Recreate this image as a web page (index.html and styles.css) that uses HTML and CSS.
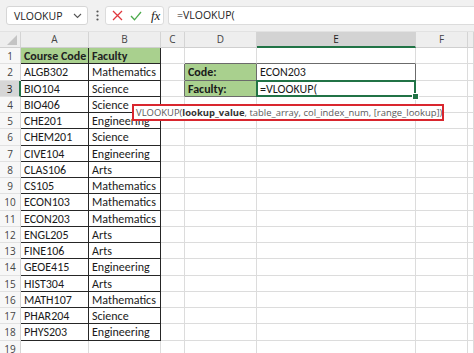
FILE: index.html
```html
<!DOCTYPE html>
<html>
<head>
<meta charset="utf-8">
<link rel="stylesheet" href="styles.css">
</head>
<body>
<div class="app">
  <div class="toolbar">
    <div class="namebox">
      <span>VLOOKUP</span>
      <svg class="chev" width="9" height="6" viewBox="0 0 9 6"><polyline points="1,1 4.5,4.5 8,1" fill="none" stroke="#555" stroke-width="1.1"/></svg>
    </div>
    <svg class="dots" width="3" height="11" viewBox="0 0 3 11"><circle cx="1.5" cy="1.5" r="1.1" fill="#555"/><circle cx="1.5" cy="5.5" r="1.1" fill="#555"/><circle cx="1.5" cy="9.5" r="1.1" fill="#555"/></svg>
    <div class="fbtns">
      <svg width="11" height="11" viewBox="0 0 11 11"><path d="M1 1 L10 10 M10 1 L1 10" stroke="#e0383e" stroke-width="1.3" fill="none"/></svg>
      <svg width="12" height="10" viewBox="0 0 12 10"><polyline points="1,5 4.5,8.8 11,1" fill="none" stroke="#4caa4c" stroke-width="1.3"/></svg>
      <span class="fx">fx</span>
    </div>
    <div class="formula">=VLOOKUP(</div>
  </div>

  <div class="sheet">
    <div class="corner"><svg width="10" height="10" viewBox="0 0 10 10"><polygon points="10,0 10,10 0,10" fill="#c4c4c4"/></svg></div>
    <div class="ch">A</div><div class="ch">B</div><div class="ch">C</div><div class="ch">D</div><div class="ch sel">E</div><div class="ch">F</div><div class="ch"></div>

    <div class="rh">1</div><div class="c t hd">Course Code</div><div class="c t hd">Faculty</div><div class="c"></div><div class="c bb"></div><div class="c bb"></div><div class="c"></div><div class="c"></div>
    <div class="rh">2</div><div class="c t">ALGB302</div><div class="c t">Mathematics</div><div class="c br"></div><div class="c lbl">Code:</div><div class="c box">ECON203</div><div class="c"></div><div class="c"></div>
    <div class="rh rsel">3</div><div class="c t">BIO104</div><div class="c t">Science</div><div class="c br"></div><div class="c lbl">Faculty:</div><div class="c box active">=VLOOKUP(<span class="handle"></span></div><div class="c"></div><div class="c"></div>
    <div class="rh">4</div><div class="c t">BIO406</div><div class="c t">Science</div><div class="c"></div><div class="c"></div><div class="c"></div><div class="c"></div><div class="c"></div>
    <div class="rh">5</div><div class="c t">CHE201</div><div class="c t">Engineering</div><div class="c"></div><div class="c"></div><div class="c"></div><div class="c"></div><div class="c"></div>
    <div class="rh">6</div><div class="c t">CHEM201</div><div class="c t">Science</div><div class="c"></div><div class="c"></div><div class="c"></div><div class="c"></div><div class="c"></div>
    <div class="rh">7</div><div class="c t">CIVE104</div><div class="c t">Engineering</div><div class="c"></div><div class="c"></div><div class="c"></div><div class="c"></div><div class="c"></div>
    <div class="rh">8</div><div class="c t">CLAS106</div><div class="c t">Arts</div><div class="c"></div><div class="c"></div><div class="c"></div><div class="c"></div><div class="c"></div>
    <div class="rh">9</div><div class="c t">CS105</div><div class="c t">Mathematics</div><div class="c"></div><div class="c"></div><div class="c"></div><div class="c"></div><div class="c"></div>
    <div class="rh">10</div><div class="c t">ECON103</div><div class="c t">Mathematics</div><div class="c"></div><div class="c"></div><div class="c"></div><div class="c"></div><div class="c"></div>
    <div class="rh">11</div><div class="c t">ECON203</div><div class="c t">Mathematics</div><div class="c"></div><div class="c"></div><div class="c"></div><div class="c"></div><div class="c"></div>
    <div class="rh">12</div><div class="c t">ENGL205</div><div class="c t">Arts</div><div class="c"></div><div class="c"></div><div class="c"></div><div class="c"></div><div class="c"></div>
    <div class="rh">13</div><div class="c t">FINE106</div><div class="c t">Arts</div><div class="c"></div><div class="c"></div><div class="c"></div><div class="c"></div><div class="c"></div>
    <div class="rh">14</div><div class="c t">GEOE415</div><div class="c t">Engineering</div><div class="c"></div><div class="c"></div><div class="c"></div><div class="c"></div><div class="c"></div>
    <div class="rh">15</div><div class="c t">HIST304</div><div class="c t">Arts</div><div class="c"></div><div class="c"></div><div class="c"></div><div class="c"></div><div class="c"></div>
    <div class="rh">16</div><div class="c t">MATH107</div><div class="c t">Mathematics</div><div class="c"></div><div class="c"></div><div class="c"></div><div class="c"></div><div class="c"></div>
    <div class="rh">17</div><div class="c t">PHAR204</div><div class="c t">Science</div><div class="c"></div><div class="c"></div><div class="c"></div><div class="c"></div><div class="c"></div>
    <div class="rh">18</div><div class="c t">PHYS203</div><div class="c t">Engineering</div><div class="c"></div><div class="c"></div><div class="c"></div><div class="c"></div><div class="c"></div>
    <div class="rh">19</div><div class="c"></div><div class="c"></div><div class="c"></div><div class="c"></div><div class="c"></div><div class="c"></div><div class="c"></div>

    <div class="tooltip">VLOOKUP(<b>lookup_value</b>, table_array, col_index_num, [range_lookup])</div>
  </div>
</div>
</body>
</html>
```

FILE: styles.css
```css
html, body {
  margin: 0;
  padding: 0;
  background: #ffffff;
}
.app {
  width: 474px;
  height: 353px;
  overflow: hidden;
  font-family: Carlito, Lato, "Liberation Sans", sans-serif;
  color: #1a1a1a;
}
.toolbar {
  height: 32px;
  box-sizing: border-box;
  background: #f1f1f1;
  display: flex;
  align-items: center;
  padding: 0 0 0 6px;
  border-bottom: 1px solid #e2e2e2;
}
.namebox {
  width: 82px;
  height: 19px;
  box-sizing: border-box;
  background: #fff;
  border: 1px solid #d6d6d6;
  border-radius: 3px;
  display: flex;
  align-items: center;
  justify-content: space-between;
  padding: 0 5px 0 7px;
  font-family: "Open Sans", sans-serif;
  font-size: 10.5px;
  color: #222;
}
.dots {
  margin-left: 8px;
}
.fbtns {
  margin-left: 6px;
  width: 59px;
  height: 19px;
  box-sizing: border-box;
  background: #fff;
  border: 1px solid #dcdcdc;
  border-radius: 3px;
  display: flex;
  align-items: center;
  gap: 7px;
  padding-left: 6px;
}
.fx {
  font-family: "Liberation Serif", serif;
  font-style: italic;
  font-size: 13px;
  color: #222;
  margin-left: 2px;
}
.formula {
  margin-left: 4px;
  flex: 1;
  height: 19px;
  box-sizing: border-box;
  background: #fff;
  border: 1px solid #dcdcdc;
  border-right: none;
  border-radius: 3px 0 0 3px;
  padding-left: 8px;
  font-family: "Open Sans", sans-serif;
  font-size: 10.5px;
  line-height: 17px;
  color: #222;
}
.sheet {
  position: relative;
  display: grid;
  grid-template-columns: 21px 68px 72px 24px 72px 159px 52px 6px;
  grid-template-rows: 16px repeat(19, 16.25px);
  font-size: 12px;
}
.corner {
  background: #eeeeee;
  border-right: 1px solid #d4d4d4;
  border-bottom: 1px solid #cfcfcf;
  display: flex;
  align-items: flex-end;
  justify-content: flex-end;
  padding: 0 3px 2px 0;
}
.ch {
  background: #eeeeee;
  border-right: 1px solid #d4d4d4;
  border-bottom: 1px solid #cfcfcf;
  text-align: center;
  font-family: "Open Sans", sans-serif;
  font-size: 10px;
  line-height: 15px;
  color: #444;
}
.ch.sel {
  background: #d3d3d3;
  border-bottom: 2px solid #217346;
  color: #222;
}
.rh {
  background: #f7f7f7;
  border-right: 1px solid #d4d4d4;
  border-bottom: 1px solid #e1e1e1;
  text-align: center;
  font-family: "Open Sans", sans-serif;
  font-size: 10px;
  line-height: 16px;
  color: #444;
}
.rh.rsel {
  background: #d6d6d6;
  border-right: 2px solid #217346;
  color: #222;
}
.c {
  border-right: 1px solid #dcdcdc;
  border-bottom: 1px solid #dcdcdc;
  padding-left: 3px;
  line-height: 16px;
  white-space: nowrap;
  overflow: visible;
  position: relative;
}
.c.t {
  border-right-color: #262626;
  border-bottom-color: #262626;
}
.c.hd {
  background: #a9d08e;
  font-weight: bold;
  color: #222;
}
.c.bb {
  border-bottom-color: #6b6b6b;
}
.c.br {
  border-right-color: #6b6b6b;
}
.c.lbl {
  background: #a9d08e;
  font-weight: bold;
  border-right-color: #6b6b6b;
  border-bottom-color: #6b6b6b;
}
.c.box {
  border-right-color: #6b6b6b;
  border-bottom-color: #6b6b6b;
}
.c.active::after {
  content: "";
  position: absolute;
  left: -1px;
  top: -1px;
  right: -1px;
  bottom: -1px;
  border: 2px solid #217346;
}
.handle {
  position: absolute;
  right: -4px;
  bottom: -4px;
  width: 5px;
  height: 5px;
  background: #217346;
  border: 1px solid #fff;
  z-index: 2;
}
.tooltip {
  position: absolute;
  left: 132px;
  top: 72px;
  width: 312px;
  height: 17px;
  box-sizing: border-box;
  background: #fff;
  border: 2px solid #d9262e;
  padding-left: 2px;
  font-family: "Open Sans", sans-serif;
  font-size: 9.45px;
  line-height: 13px;
  color: #5a5a5a;
  white-space: nowrap;
  overflow: hidden;
  z-index: 3;
}
.tooltip b {
  color: #333;
}
```
